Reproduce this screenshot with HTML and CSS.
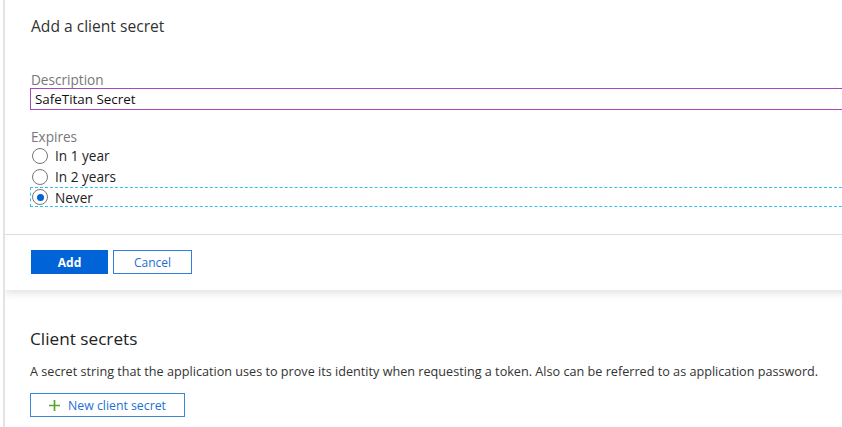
FILE: index.html
```html
<!DOCTYPE html>
<html>
<head>
<meta charset="utf-8">
<link rel="stylesheet" href="styles.css">
</head>
<body>
<div class="page">
  <section class="panel">
    <div class="panel-body">
      <h1 class="title">Add a client secret</h1>
      <div class="field">
        <div class="label">Description</div>
        <div class="input">SafeTitan Secret</div>
      </div>
      <div class="field expires">
        <div class="label">Expires</div>
        <div class="radio"><span class="circle"></span><span>In 1 year</span></div>
        <div class="radio"><span class="circle"></span><span>In 2 years</span></div>
        <div class="radio focused"><span class="circle checked"></span><span>Never</span></div>
      </div>
    </div>
    <div class="panel-foot">
      <button class="btn primary">Add</button>
      <button class="btn secondary">Cancel</button>
    </div>
  </section>
  <section class="secrets">
    <h2 class="subtitle">Client secrets</h2>
    <p class="desc">A secret string that the application uses to prove its identity when requesting a token. Also can be referred to as application password.</p>
    <button class="btn new">
      <svg width="11" height="11" viewBox="0 0 11 11"><path d="M5.5 0v11M0 5.5h11" stroke="#5ca42a" stroke-width="1.7"/></svg>
      <span>New client secret</span>
    </button>
  </section>
</div>
</body>
</html>
```

FILE: styles.css
```css
html, body {
  margin: 0;
  padding: 0;
  background: #fff;
  overflow: hidden;
}
body {
  font-family: "Open Sans", "Noto Sans", sans-serif;
  color: #222;
  padding-left: 3px;
  height: 427px;
}
.page {
  border-left: 2px solid #e3e3e3;
  height: 427px;
  overflow: hidden;
}
.panel {
  background: #fff;
  box-shadow: 0 3px 8px rgba(0,0,0,0.12);
  height: 290px;
  margin-right: -10px;
  position: relative;
}
.panel-body {
  padding: 14px 0 0 26px;
  height: 235px;
  border-bottom: 1px solid #dcdcdc;
  box-sizing: border-box;
}
.title {
  margin: 0;
  font-size: 15.6px;
  font-weight: 400;
  color: #323232;
  line-height: 24px;
}
.field {
  margin-top: 34px;
}
.label {
  font-size: 13.6px;
  color: #777;
  line-height: 16px;
}
.input {
  margin-left: -1px;
  border: 1px solid #a549c0;
  height: 20px;
  line-height: 20px;
  font-size: 13.4px;
  padding-left: 4px;
  color: #111;
}
.expires {
  margin-top: 19px;
}
.radio {
  display: flex;
  align-items: center;
  gap: 7px;
  height: 19px;
  font-size: 13.6px;
  color: #222;
  margin-left: -1px;
  padding-left: 1px;
  border: 1px dashed transparent;
}
.radio.focused {
  border-color: #2fc4f0;
  height: 18px;
}
.circle {
  width: 16px;
  height: 16px;
  border: 1px solid #777;
  border-radius: 50%;
  box-sizing: border-box;
  display: flex;
  align-items: center;
  justify-content: center;
  background: #fff;
}
.circle.checked::after {
  content: "";
  width: 7px;
  height: 7px;
  border-radius: 50%;
  background: #0063d8;
}
.panel-foot {
  padding: 15px 0 0 26px;
  display: flex;
  gap: 5px;
}
.btn {
  font-family: "Open Sans", "Noto Sans", sans-serif;
  height: 24px;
  box-sizing: border-box;
  font-size: 12px;
  cursor: pointer;
  padding: 0;
}
.primary {
  width: 77px;
  background: #0063d8;
  border: 1px solid #0063d8;
  color: #fff;
  font-weight: 700;
}
.secondary {
  width: 79px;
  background: #fff;
  border: 1px solid #2f7fe0;
  color: #1d6fd4;
}
.secrets {
  padding: 37px 0 0 25px;
}
.subtitle {
  margin: 0;
  font-size: 17.2px;
  font-weight: 400;
  color: #222;
  line-height: 24px;
}
.desc {
  margin: 12px 0 0;
  font-size: 12.65px;
  color: #333;
  line-height: 16px;
  white-space: nowrap;
}
.new {
  margin-top: 14px;
  width: 155px;
  background: #fff;
  border: 1px solid #3b86d6;
  color: #1d6fd4;
  display: flex;
  align-items: center;
  justify-content: center;
  gap: 8px;
  font-size: 12.3px;
}
```
